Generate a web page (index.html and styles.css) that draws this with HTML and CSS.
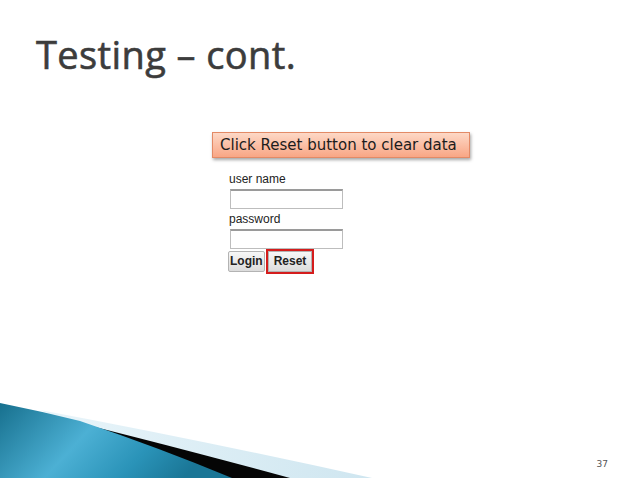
FILE: index.html
```html
<!DOCTYPE html>
<html>
<head>
<meta charset="utf-8">
<link rel="stylesheet" href="styles.css">
</head>
<body>
<div class="slide">
  <h1 class="title">Testing – cont.</h1>
  <div class="content">
    <div class="callout">Click Reset button to clear data</div>
    <div class="form">
      <div class="label">user name</div>
      <div class="input"></div>
      <div class="label label-pw">password</div>
      <div class="input"></div>
      <div class="buttons">
        <span class="btn">Login</span>
        <span class="btn btn-reset">Reset</span>
      </div>
    </div>
  </div>
  <svg class="swoosh" width="400" height="90" viewBox="0 388 400 90">
    <defs>
      <linearGradient id="teal" x1="0" y1="0" x2="1" y2="0.3">
        <stop offset="0" stop-color="#17708e"/>
        <stop offset="0.45" stop-color="#4cb0d4"/>
        <stop offset="0.75" stop-color="#2a93b8"/>
        <stop offset="1" stop-color="#1a7696"/>
      </linearGradient>
      <linearGradient id="pale" x1="0" y1="0" x2="1" y2="0">
        <stop offset="0" stop-color="#e9f5fa"/>
        <stop offset="1" stop-color="#cfe6f0"/>
      </linearGradient>
    </defs>
    <path d="M40 410 Q 200 440 372 478 L 200 478 Z" fill="url(#pale)"/>
    <path d="M30 411 Q 150 440 290 478 L 200 478 Z" fill="#050505"/>
    <path d="M0 403 Q 40 411 80 421 Q 160 448 232 478 L 0 478 Z" fill="url(#teal)"/>
  </svg>
  <div class="pagenum">37</div>
</div>
</body>
</html>
```
FILE: styles.css
```css
html, body {
  margin: 0;
  padding: 0;
  background: #fff;
}
.slide {
  position: relative;
  width: 638px;
  height: 478px;
  overflow: hidden;
  background: #fff;
}
.title {
  margin: 0;
  padding: 28px 0 0 36px;
  font-family: "Open Sans", "DejaVu Sans", sans-serif;
  font-weight: 400;
  font-size: 38px;
  line-height: 52px;
  color: #3c3c3c;
  letter-spacing: 0.4px;
  -webkit-text-stroke: 0.6px #3c3c3c;
}
.content {
  display: flex;
  flex-direction: column;
  padding: 52px 0 0 212px;
}
.callout {
  align-self: flex-start;
  box-sizing: border-box;
  width: 258px;
  height: 26px;
  padding: 0 0 0 7px;
  background: linear-gradient(#fdd8c6, #f9a685);
  border: 1px solid #e38a66;
  box-shadow: 1px 2px 3px rgba(0,0,0,0.35);
  font-family: "DejaVu Sans", sans-serif;
  font-size: 15px;
  line-height: 24px;
  color: #1c1c1c;
}
.form {
  display: flex;
  flex-direction: column;
  align-items: flex-start;
  padding: 14px 0 0 16px;
  font-family: "Liberation Sans", Arial, sans-serif;
}
.label {
  font-size: 12px;
  line-height: 14px;
  color: #222;
  margin-left: 1px;
}
.label-pw {
  margin-top: 3px;
}
.input {
  box-sizing: border-box;
  width: 113px;
  height: 20px;
  margin: 3px 0 0 2px;
  border: 1px solid #bdbdbd;
  border-top: 2px solid #9a9a9a;
  background: #fff;
}
.buttons {
  display: flex;
  align-items: center;
  margin-top: 2px;
}
.btn {
  box-sizing: border-box;
  height: 21px;
  padding: 0 1px;
  font-size: 12px;
  font-weight: bold;
  line-height: 19px;
  color: #222;
  background: linear-gradient(#f7f7f7, #dcdcdc);
  border: 1px solid #b3b3b3;
  border-radius: 2px;
}
.btn-reset {
  padding: 0 5px;
  border-radius: 0;
  outline: 2px solid #d41c1c;
  outline-offset: 0;
  margin-left: 3px;
}
.swoosh {
  position: absolute;
  left: 0;
  bottom: 0;
}
.pagenum {
  position: absolute;
  right: 30px;
  bottom: 9px;
  font-family: "DejaVu Sans", sans-serif;
  font-size: 9px;
  color: #555;
}
```
